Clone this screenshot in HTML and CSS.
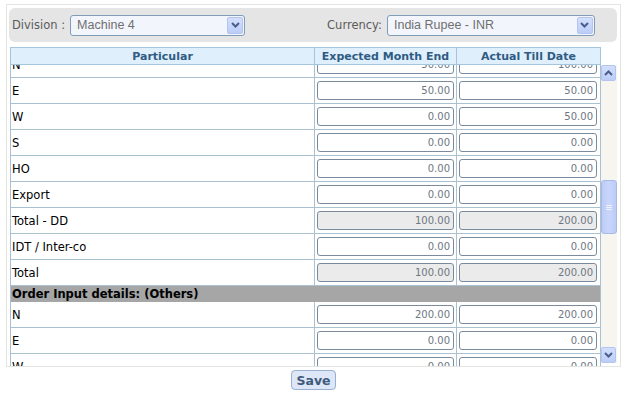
FILE: index.html
```html
<!DOCTYPE html>
<html>
<head>
<meta charset="utf-8">
<title>Order Input</title>
<link rel="stylesheet" href="styles.css">
</head>
<body>
<div class="frame">
  <div class="filters">
    <label class="field">
      <span class="field-label">Division :</span>
      <span class="select select-division">
        <select><option>Machine 4</option></select>
        <span class="select-btn"><svg width="9" height="6" viewBox="0 0 9 6"><polyline points="1,1 4.5,4.5 8,1" fill="none" stroke="#4a5e8c" stroke-width="2"/></svg></span>
      </span>
    </label>
    <label class="field field-currency">
      <span class="field-label">Currency:</span>
      <span class="select select-currency">
        <select><option>India Rupee - INR</option></select>
        <span class="select-btn"><svg width="9" height="6" viewBox="0 0 9 6"><polyline points="1,1 4.5,4.5 8,1" fill="none" stroke="#4a5e8c" stroke-width="2"/></svg></span>
      </span>
    </label>
  </div>

  <div class="grid-row grid-head">
    <div class="cell">Particular</div>
    <div class="cell">Expected Month End</div>
    <div class="cell">Actual Till Date</div>
  </div>

  <div class="scroller">
    <div class="viewport">
      <div class="rows">
        <div class="grid-row"><div class="cell label">N</div><div class="cell"><input class="num" value="50.00"></div><div class="cell"><input class="num" value="100.00"></div></div>
        <div class="grid-row"><div class="cell label">E</div><div class="cell"><input class="num" value="50.00"></div><div class="cell"><input class="num" value="50.00"></div></div>
        <div class="grid-row"><div class="cell label">W</div><div class="cell"><input class="num" value="0.00"></div><div class="cell"><input class="num" value="50.00"></div></div>
        <div class="grid-row"><div class="cell label">S</div><div class="cell"><input class="num" value="0.00"></div><div class="cell"><input class="num" value="0.00"></div></div>
        <div class="grid-row"><div class="cell label">HO</div><div class="cell"><input class="num" value="0.00"></div><div class="cell"><input class="num" value="0.00"></div></div>
        <div class="grid-row"><div class="cell label">Export</div><div class="cell"><input class="num" value="0.00"></div><div class="cell"><input class="num" value="0.00"></div></div>
        <div class="grid-row"><div class="cell label">Total - DD</div><div class="cell"><input class="num total" value="100.00" readonly></div><div class="cell"><input class="num total" value="200.00" readonly></div></div>
        <div class="grid-row"><div class="cell label">IDT / Inter-co</div><div class="cell"><input class="num" value="0.00"></div><div class="cell"><input class="num" value="0.00"></div></div>
        <div class="grid-row"><div class="cell label">Total</div><div class="cell"><input class="num total" value="100.00" readonly></div><div class="cell"><input class="num total" value="200.00" readonly></div></div>
        <div class="grid-row section"><div class="cell section-title">Order Input details: (Others)</div></div>
        <div class="grid-row"><div class="cell label">N</div><div class="cell"><input class="num" value="200.00"></div><div class="cell"><input class="num" value="200.00"></div></div>
        <div class="grid-row"><div class="cell label">E</div><div class="cell"><input class="num" value="0.00"></div><div class="cell"><input class="num" value="0.00"></div></div>
        <div class="grid-row"><div class="cell label">W</div><div class="cell"><input class="num" value="0.00"></div><div class="cell"><input class="num" value="0.00"></div></div>
        <div class="grid-row"><div class="cell label">S</div><div class="cell"><input class="num" value="0.00"></div><div class="cell"><input class="num" value="0.00"></div></div>
      </div>
    </div>
    <div class="scrollbar">
      <span class="sb-btn"><svg width="9" height="6" viewBox="0 0 9 6"><polyline points="1,5 4.5,1.5 8,5" fill="none" stroke="#4a5e8c" stroke-width="2"/></svg></span>
      <span class="sb-track"><span class="sb-thumb"><span class="grip"></span></span></span>
      <span class="sb-btn"><svg width="9" height="6" viewBox="0 0 9 6"><polyline points="1,1 4.5,4.5 8,1" fill="none" stroke="#4a5e8c" stroke-width="2"/></svg></span>
    </div>
  </div>
</div>
<div class="actions">
  <button class="save" type="button">Save</button>
</div>
</body>
</html>
```
FILE: styles.css
```css
* { box-sizing: border-box; }

body {
  margin: 0;
  background: #ffffff;
  font-family: "DejaVu Sans", Verdana, sans-serif;
  font-size: 11px;
  color: #000;
}

.frame {
  margin: 4px 0 0 6px;
  width: 615px;
  height: 363px;
  border: 1px solid #e2e5e0;
  padding: 3px 3px 0 2px;
}

.filters {
  height: 34px;
  background: #e5e5e5;
  border-radius: 6px;
  display: flex;
  align-items: center;
  padding-left: 3px;
}

.field {
  display: flex;
  align-items: center;
  gap: 5px;
}

.field-currency { margin-left: 82px; }

.field-label {
  color: #5b5b5b;
  font-size: 11.5px;
}

.select {
  position: relative;
  display: block;
}

.select select {
  appearance: none;
  -webkit-appearance: none;
  display: block;
  height: 21px;
  border: 1px solid #7f9db9;
  border-radius: 3px;
  background: #f2f5fc;
  color: #707070;
  font-family: "Liberation Sans", Arial, sans-serif;
  font-size: 12.5px;
  padding: 0 0 0 6px;
  margin: 0;
}

.select-division select { width: 175px; }
.select-currency select { width: 208px; }

.select-btn {
  position: absolute;
  top: 2px;
  right: 2px;
  width: 16px;
  height: 17px;
  border: 1px solid #b3c4ee;
  border-radius: 2px;
  background: linear-gradient(#d3dffd, #bccdf7);
  display: flex;
  align-items: center;
  justify-content: center;
  pointer-events: none;
}

.grid-row {
  display: grid;
  grid-template-columns: 304px 142px 144px;
  width: 591px;
  height: 26px;
  border-right: 1px solid #a9c1d1;
  border-bottom: 1px solid #a9c1d1;
}

.cell {
  border-left: 1px solid #a9c1d1;
  display: flex;
  align-items: center;
  padding-left: 2px;
  min-width: 0;
}

.grid-head {
  margin: 5px 0 0 1px;
  height: 18px;
  border-top: 1px solid #a3c5de;
  border-bottom: 1px solid #a3c5de;
  border-right-color: #a3c5de;
  background: #dfeffb;
}

.grid-head .cell {
  justify-content: center;
  padding-left: 0;
  font-weight: bold;
  font-size: 11px;
  color: #2f5b84;
  border-left-color: #a3c5de;
  white-space: nowrap;
}

.scroller {
  display: flex;
  margin-left: 1px;
}

.viewport {
  width: 591px;
  height: 301px;
  overflow: hidden;
}

.rows { margin-top: -13px; }

.label {
  padding-left: 1px;
  font-size: 11.5px;
  white-space: nowrap;
}

.num {
  display: block;
  width: 137px;
  height: 19px;
  margin: 0;
  border: 1px solid #7c8b9b;
  border-radius: 3px;
  background: #ffffff;
  padding: 0 3px 0 0;
  text-align: right;
  font-family: "DejaVu Sans", Verdana, sans-serif;
  font-size: 10px;
  color: #6d7783;
}

.grid-row .cell:last-child .num { width: 138px; }

.num.total { background: #ebebeb; }

.section {
  height: 16px;
  border-bottom: none;
  display: block;
}

.section-title {
  height: 16px;
  background: #a6a6a6;
  font-weight: bold;
  font-size: 11.5px;
  padding-left: 1px;
  white-space: nowrap;
}

.scrollbar {
  width: 16px;
  height: 298px;
  background: #f6f5ef;
  display: flex;
  flex-direction: column;
}

.sb-btn {
  width: 15px;
  height: 16px;
  border: 1px solid #b3c4ee;
  border-radius: 2px;
  background: linear-gradient(#d3dffd, #bccdf7);
  display: flex;
  align-items: center;
  justify-content: center;
}

.sb-track {
  flex: 1;
  position: relative;
}

.sb-thumb {
  position: absolute;
  top: 99px;
  left: 0;
  width: 16px;
  height: 54px;
  border: 1px solid #a9b9e6;
  border-radius: 3px;
  background: linear-gradient(90deg, #bccbf7, #c9d6fb 50%, #bccbf7);
  display: flex;
  align-items: center;
  justify-content: center;
}

.grip {
  width: 6px;
  height: 5px;
  border-top: 1px solid #eef2fe;
  border-bottom: 1px solid #eef2fe;
  position: relative;
}

.grip::after {
  content: "";
  position: absolute;
  left: 0;
  right: 0;
  top: 1px;
  border-top: 1px solid #eef2fe;
}

.actions {
  display: flex;
  justify-content: center;
  margin-top: 3px;
}

.save {
  width: 45px;
  height: 20px;
  margin: 0;
  padding: 0;
  border: 1px solid #98afcf;
  border-radius: 4px;
  background: #dde7f7;
  font-family: "DejaVu Sans", Verdana, sans-serif;
  font-weight: bold;
  font-size: 12.5px;
  color: #3f5a7b;
}
```
